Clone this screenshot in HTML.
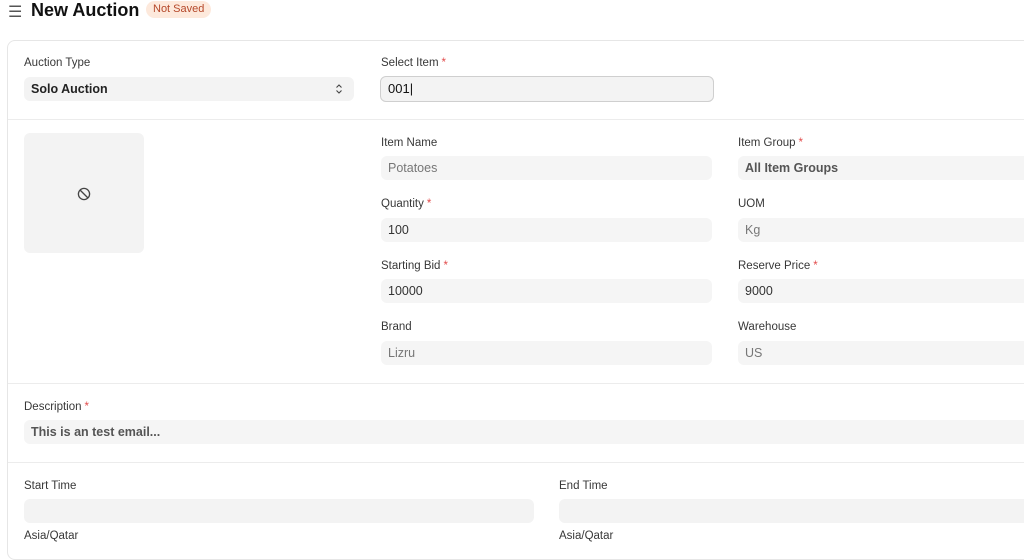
<!DOCTYPE html>
<html><head><style>
*{margin:0;padding:0;box-sizing:border-box}
body{width:1024px;height:545px;overflow:hidden;background:#fff;font-family:"Liberation Sans",sans-serif;position:relative;color:#1f272e}
.a{position:absolute}
.lbl{position:absolute;font-size:11.5px;color:#383838}
.lbl b{color:#e24c4c;font-weight:normal;margin-left:3px}
.in{position:absolute;height:24px;background:#f3f3f3;border-radius:6px;font-size:12.5px;line-height:24px;padding-left:7px;color:#333}
.ro{background:#f5f5f5;color:#777}
.hr{position:absolute;left:8px;right:0;height:1px;background:#ececec}
</style></head><body>
<div class="a" style="left:8px;top:2px;font-size:16px;color:#555">☰</div>
<div class="a" style="left:31px;top:0px;font-size:18px;font-weight:bold;color:#111">New Auction</div>
<div class="a" style="left:146px;top:1px;height:17px;padding:0 7px;background:#fde9dc;color:#b5482a;font-size:11px;line-height:17px;border-radius:9px">Not Saved</div>
<div class="a" style="left:7px;top:40px;width:1030px;height:520px;border:1px solid #e6e6e6;border-radius:8px"></div>
<div class="lbl" style="left:24px;top:57px">Auction Type</div>
<div class="in" style="left:24px;top:77px;width:330px;font-weight:bold;color:#222">Solo Auction</div>
<svg class="a" style="left:335px;top:83px" width="8" height="12" viewBox="0 0 8 12"><path d="M1.5 4.5L4 2L6.5 4.5M1.5 7.5L4 10L6.5 7.5" fill="none" stroke="#444" stroke-width="1.1"/></svg>
<div class="lbl" style="left:381px;top:57px">Select Item<b>*</b></div>
<div class="in" style="left:380px;top:76px;width:334px;height:26px;border:1px solid #cfcfcf;color:#111;font-size:13px;line-height:24px">001|</div>
<div class="hr" style="top:119px"></div>
<div class="a" style="left:24px;top:133px;width:120px;height:120px;background:#f3f3f3;border-radius:6px"></div>
<svg class="a" style="left:77px;top:187px" width="14" height="14" viewBox="0 0 14 14"><circle cx="7" cy="7" r="5.6" fill="none" stroke="#444" stroke-width="1.3"/><path d="M3 3L11 11" stroke="#444" stroke-width="1.3"/></svg>
<div class="lbl" style="left:381px;top:137px">Item Name</div>
<div class="in ro" style="left:381px;top:156px;width:331px">Potatoes</div>
<div class="lbl" style="left:738px;top:137px">Item Group<b>*</b></div>
<div class="in ro" style="left:738px;top:156px;width:300px;font-weight:bold;color:#555">All Item Groups</div>
<div class="lbl" style="left:381px;top:198px">Quantity<b>*</b></div>
<div class="in ro" style="left:381px;top:218px;width:331px;color:#333">100</div>
<div class="lbl" style="left:738px;top:198px">UOM</div>
<div class="in ro" style="left:738px;top:218px;width:300px">Kg</div>
<div class="lbl" style="left:381px;top:260px">Starting Bid<b>*</b></div>
<div class="in ro" style="left:381px;top:279px;width:331px;color:#333">10000</div>
<div class="lbl" style="left:738px;top:260px">Reserve Price<b>*</b></div>
<div class="in ro" style="left:738px;top:279px;width:300px;color:#333">9000</div>
<div class="lbl" style="left:381px;top:321px">Brand</div>
<div class="in ro" style="left:381px;top:341px;width:331px">Lizru</div>
<div class="lbl" style="left:738px;top:321px">Warehouse</div>
<div class="in ro" style="left:738px;top:341px;width:300px">US</div>
<div class="hr" style="top:383px"></div>
<div class="lbl" style="left:24px;top:401px">Description<b>*</b></div>
<div class="in ro" style="left:24px;top:420px;width:1010px;color:#555;font-weight:bold">This is an test email...</div>
<div class="hr" style="top:462px"></div>
<div class="lbl" style="left:24px;top:480px">Start Time</div>
<div class="in" style="left:24px;top:499px;width:510px"></div>
<div class="lbl" style="left:24px;top:530px">Asia/Qatar</div>
<div class="lbl" style="left:559px;top:480px">End Time</div>
<div class="in" style="left:559px;top:499px;width:480px"></div>
<div class="lbl" style="left:559px;top:530px">Asia/Qatar</div>
</body></html>
